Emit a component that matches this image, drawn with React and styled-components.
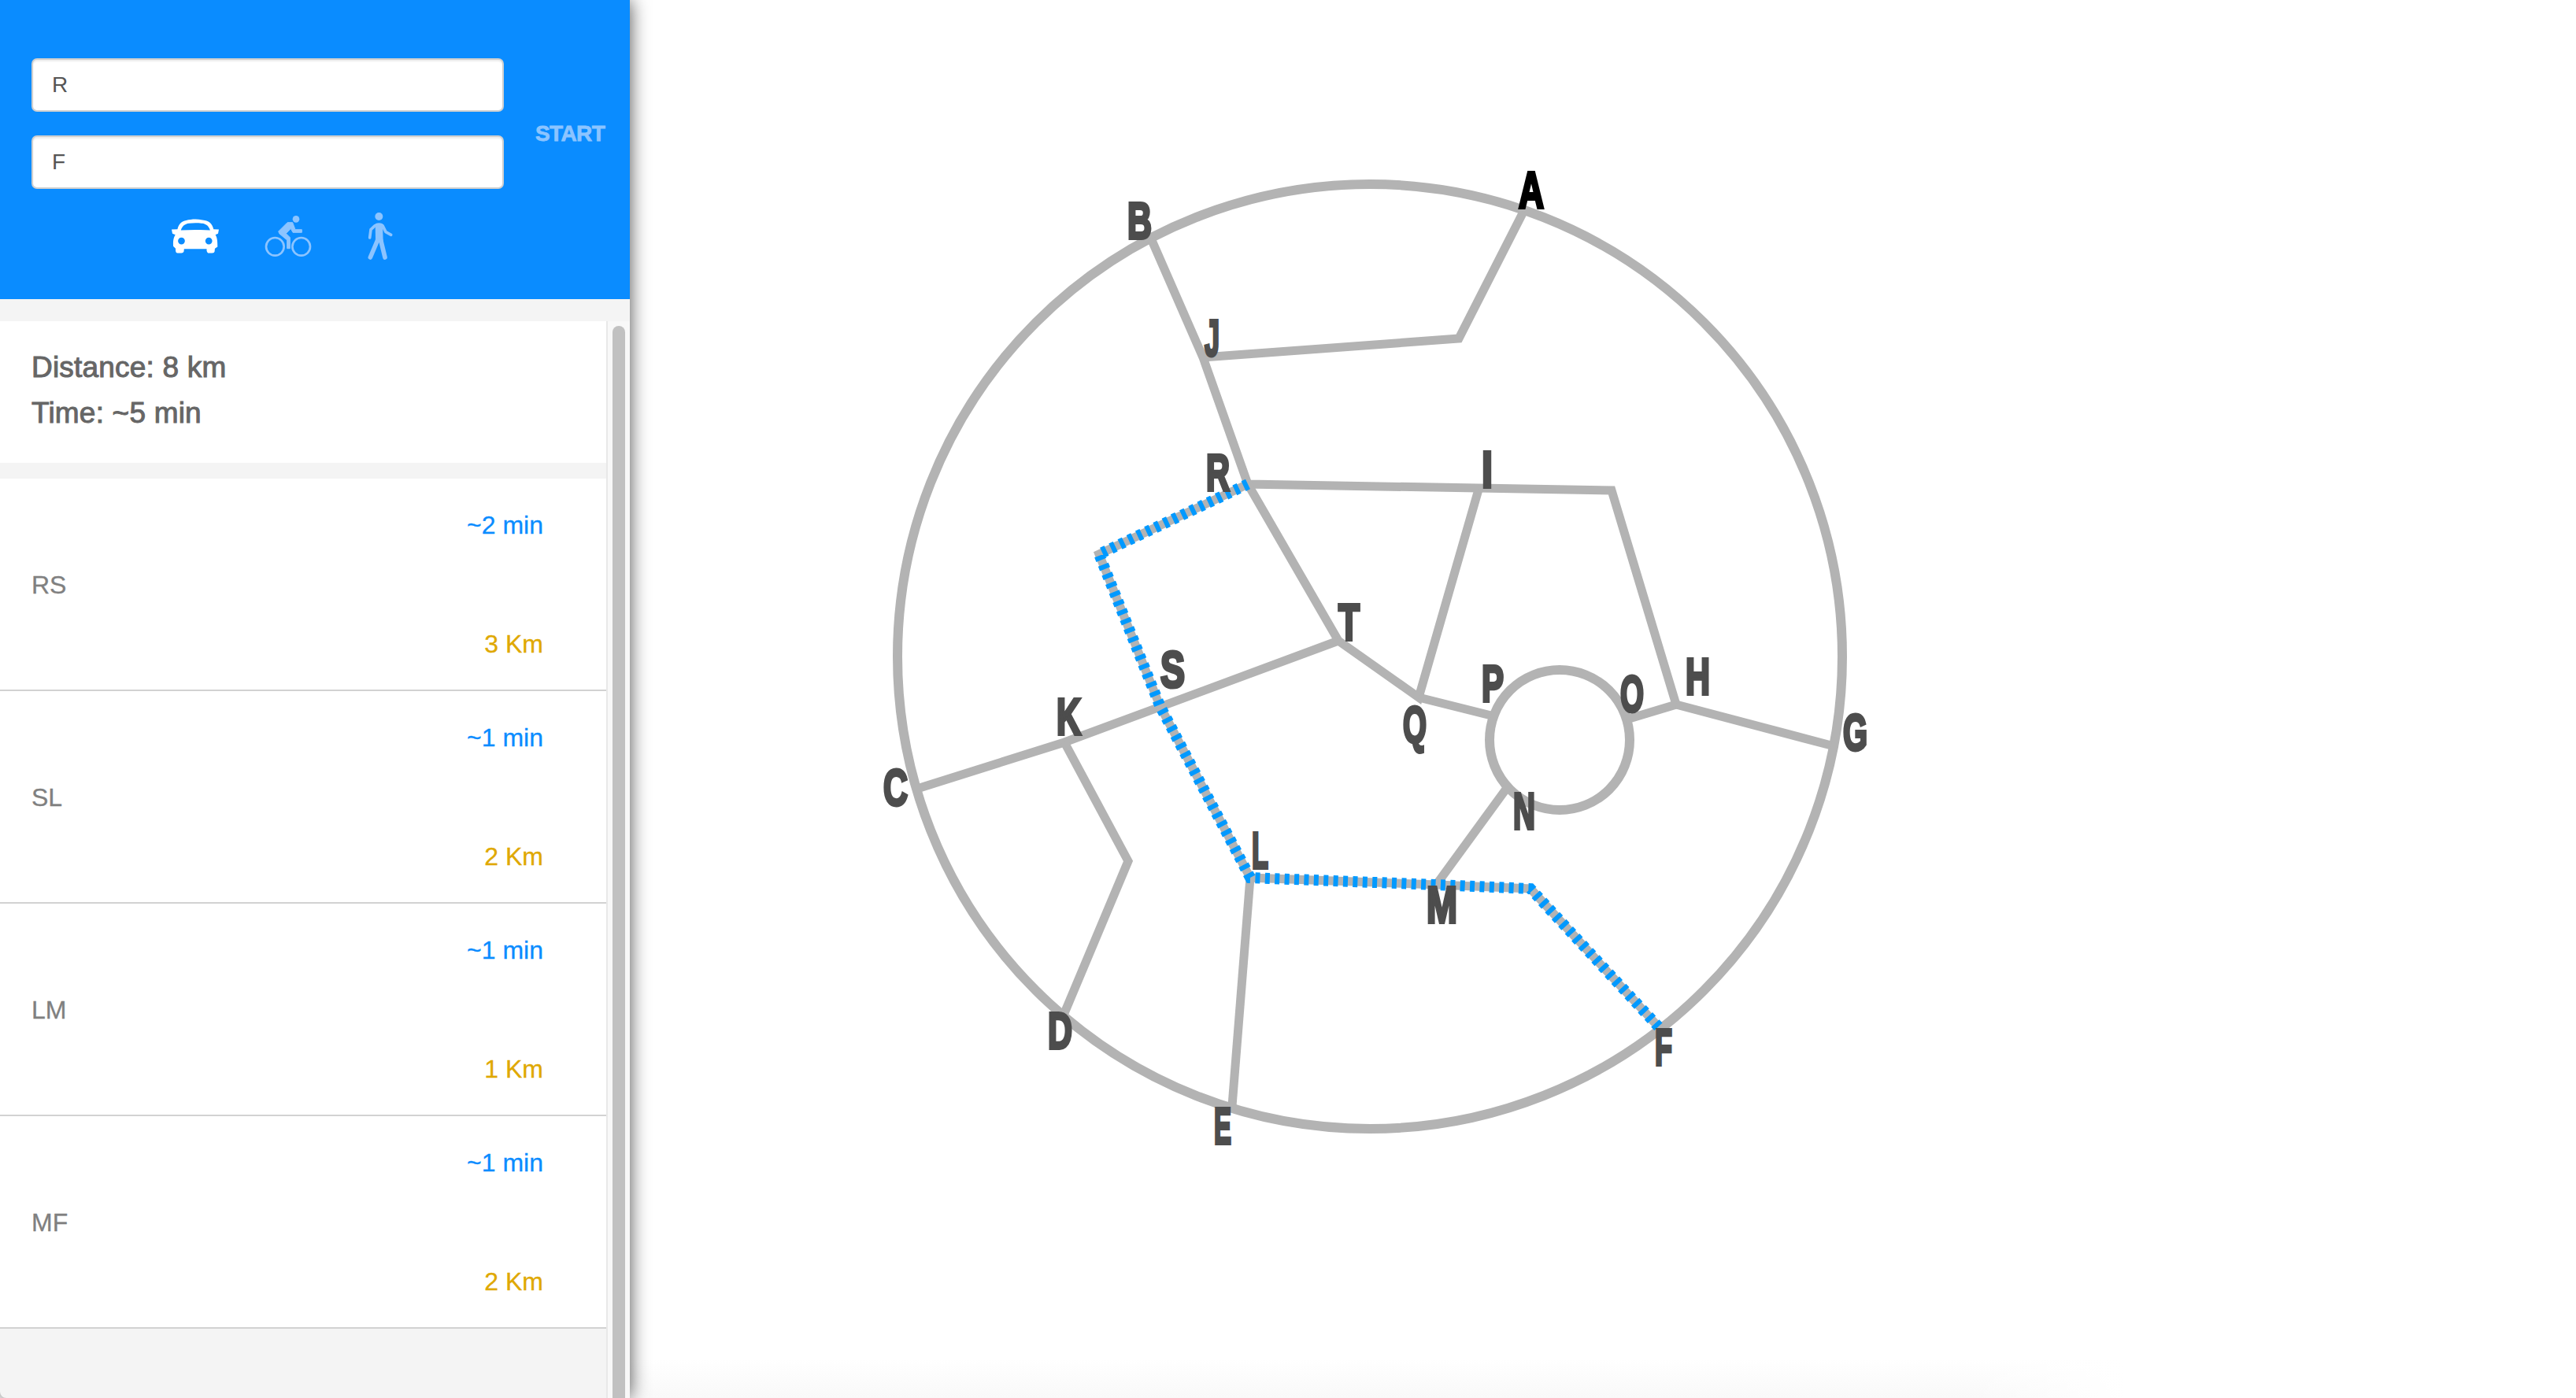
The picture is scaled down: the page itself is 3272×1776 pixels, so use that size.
import React from "react";
import styled, { createGlobalStyle } from "styled-components";

const GlobalStyle = createGlobalStyle`
  html, body {
    margin: 0;
    padding: 0;
    background: #fff;
    font-family: "Liberation Sans", Arial, sans-serif;
  }
`;

const steps = [
  { name: "RS", time: "~2 min", dist: "3 Km" },
  { name: "SL", time: "~1 min", dist: "2 Km" },
  { name: "LM", time: "~1 min", dist: "1 Km" },
  { name: "MF", time: "~1 min", dist: "2 Km" },
];

const roads = [
  "M1935 269 L1853 430 L1528 454",
  "M1462 303 L1528 454 L1585 615 L2047 623 L2129 895 L2066 914",
  "M1878 622 L1802 886 L1700 814 L1585 615",
  "M1802 886 L1894 909",
  "M2129 895 L2326 947",
  "M1700 814 L1352 943 L1168 1001",
  "M1352 943 L1433 1094 L1352 1287",
  "M1588 1115 L1565 1405",
  "M1914 1001 L1825 1123",
];

const route =
  "M1585 615 L1396 704 L1473 896 L1588 1115 L1825 1124 L1944 1129 L2108 1306";

const labels = [
  { t: "A", x: 1929, y: 264, w: 32, dark: true },
  { t: "B", x: 1432, y: 303, w: 31 },
  { t: "J", x: 1530, y: 452, w: 19 },
  { t: "R", x: 1532, y: 623, w: 30 },
  { t: "I", x: 1882, y: 619, w: 14 },
  { t: "T", x: 1700, y: 813, w: 27 },
  { t: "S", x: 1474, y: 873, w: 31 },
  { t: "P", x: 1882, y: 891, w: 28 },
  { t: "Q", x: 1782, y: 943, w: 30 },
  { t: "O", x: 2058, y: 904, w: 30 },
  { t: "H", x: 2141, y: 882, w: 31 },
  { t: "G", x: 2341, y: 953, w: 31 },
  { t: "N", x: 1922, y: 1053, w: 28 },
  { t: "M", x: 1812, y: 1172, w: 39 },
  { t: "F", x: 2102, y: 1353, w: 22 },
  { t: "K", x: 1342, y: 933, w: 31 },
  { t: "C", x: 1122, y: 1023, w: 31 },
  { t: "L", x: 1590, y: 1103, w: 21 },
  { t: "D", x: 1331, y: 1332, w: 31 },
  { t: "E", x: 1542, y: 1453, w: 22 },
];

function CarIcon() {
  return (
    <svg width="60" height="44" viewBox="85 85 178 130">
      <path
        fill="#fff"
        fillRule="evenodd"
        d="M85 125 L107 124 C112 105 122 94 140 91 C160 85 190 85 210 91 C228 94 238 105 243 124 L263 125 L260 140 L250 145 C256 155 258 165 258 190 L248 197 L247 208 Q246 214 238 214 L225 214 Q219 214 217 204 L217 198 L132 198 L131 208 Q129 214 122 214 L107 214 Q101 214 100 205 L100 197 L91 188 C90 165 93 155 99 145 L88 140 Z M120 128 C125 112 135 104 150 102 C165 100 185 100 200 102 C215 104 225 112 230 128 Q175 124 120 128 Z M109 168 A13 13 0 1 0 135 168 A13 13 0 1 0 109 168 Z M212 168 A13 13 0 1 0 238 168 A13 13 0 1 0 212 168 Z"
      />
    </svg>
  );
}

function BikeIcon() {
  return (
    <svg width="60" height="52" viewBox="438 72 180 156">
      <g fill="none" stroke="#8cc4ff" strokeWidth="8">
        <circle cx="478" cy="190" r="34" />
        <circle cx="578" cy="190" r="34" />
      </g>
      <circle cx="558" cy="85" r="13" fill="#8cc4ff" />
      <path
        fill="#8cc4ff"
        stroke="#8cc4ff"
        strokeWidth="3"
        strokeLinejoin="round"
        d="M525 98 L545 98 L555 125 L580 125 L580 136 L546 136 L538 121 L520 140 L535 155 L535 197 L524 197 L524 165 L495 141 L491 132 Z"
      />
    </svg>
  );
}

function WalkIcon() {
  return (
    <svg width="60" height="60" viewBox="789 60 180 180">
      <circle cx="871" cy="75" r="15" fill="#8cc4ff" />
      <path fill="#8cc4ff" d="M857 103 Q871 96 885 103 L887 170 L858 170 Z" />
      <g fill="none" stroke="#8cc4ff" strokeLinecap="round" strokeLinejoin="round">
        <path strokeWidth="17" d="M866 165 L838 231 M878 165 L894 231" />
        <path strokeWidth="11" d="M856 110 L840 125 L836 156 M885 110 L897 134 L917 145" />
      </g>
    </svg>
  );
}

export default function App() {
  return (
    <Page>
      <GlobalStyle />
      <Sidebar>
        <Header>
          <FormColumn>
            <PlaceInput value="R" readOnly />
            <PlaceInput value="F" readOnly />
            <ModeRow>
              <ModeButton>
                <CarIcon />
              </ModeButton>
              <ModeButton>
                <BikeIcon />
              </ModeButton>
              <ModeButton>
                <WalkIcon />
              </ModeButton>
            </ModeRow>
          </FormColumn>
          <StartButton>START</StartButton>
        </Header>
        <Body>
          <Results>
            <Summary>
              <SummaryLine>Distance: 8 km</SummaryLine>
              <SummaryLine>Time: ~5 min</SummaryLine>
            </Summary>
            <StepList>
              {steps.map((s, i) => (
                <Step key={i}>
                  <StepTime>{s.time}</StepTime>
                  <StepName>{s.name}</StepName>
                  <StepDist>{s.dist}</StepDist>
                </Step>
              ))}
            </StepList>
          </Results>
          <ScrollTrack>
            <ScrollThumb />
          </ScrollTrack>
        </Body>
      </Sidebar>
      <MapArea>
        <svg width="2472" height="1776" viewBox="800 0 2472 1776">
          <g fill="none" stroke="#b3b3b3" strokeWidth="11" strokeLinejoin="miter">
            <circle cx="1740" cy="834" r="600" strokeWidth="12" />
            <circle cx="1981" cy="940" r="89" strokeWidth="12" />
            {roads.map((d, i) => (
              <path key={i} d={d} />
            ))}
            <path d={route} />
          </g>
          <path
            d={route}
            fill="none"
            stroke="#0099ff"
            strokeWidth="14"
            strokeDasharray="6 6.4"
          />
          {labels.map((l) => (
            <MapLabel
              key={l.t}
              x={l.x}
              y={l.y}
              textLength={l.w}
              lengthAdjust="spacingAndGlyphs"
              $dark={l.dark}
            >
              {l.t}
            </MapLabel>
          ))}
        </svg>
      </MapArea>
    </Page>
  );
}

const Page = styled.div`
  display: flex;
  width: 3272px;
  height: 1776px;
  overflow: hidden;
  background: #fff;
`;

const Sidebar = styled.aside`
  position: relative;
  z-index: 1;
  display: flex;
  flex-direction: column;
  flex: 0 0 800px;
  height: 100%;
  background: #f4f4f4;
  border-bottom-left-radius: 8px;
  box-shadow: 0 0 24px rgba(0, 0, 0, 0.7);
`;

const Header = styled.header`
  display: flex;
  align-items: flex-start;
  flex: 0 0 380px;
  box-sizing: border-box;
  padding: 74px 0 0 40px;
  background: #0a8cff;
`;

const FormColumn = styled.div`
  display: flex;
  flex-direction: column;
  gap: 30px;
  width: 600px;
`;

const PlaceInput = styled.input`
  box-sizing: border-box;
  width: 100%;
  height: 68px;
  padding: 0 24px;
  border: 2px solid #cfcfcf;
  border-radius: 7px;
  background: #fff;
  box-shadow: inset 0 2px 2px rgba(0, 0, 0, 0.08);
  color: #555;
  font-family: "Liberation Sans", Arial, sans-serif;
  font-size: 28px;
  outline: none;
`;

const ModeRow = styled.div`
  display: flex;
  justify-content: center;
  align-items: center;
  gap: 58px;
  height: 60px;
  padding-left: 52px;
`;

const ModeButton = styled.div`
  display: flex;
  justify-content: center;
  align-items: center;
  width: 60px;
  height: 60px;
`;

const StartButton = styled.div`
  margin: 80px 0 0 40px;
  color: #8cc4ff;
  font-size: 28px;
  font-weight: bold;
  letter-spacing: -0.6px;
  -webkit-text-stroke: 0.8px #8cc4ff;
`;

const Body = styled.div`
  display: flex;
  flex: 1;
  min-height: 0;
`;

const Results = styled.div`
  flex: 0 0 770px;
  padding-top: 28px;
`;

const Summary = styled.section`
  box-sizing: border-box;
  height: 180px;
  padding: 30px 40px 0;
  background: #fff;
`;

const SummaryLine = styled.div`
  height: 58px;
  color: #666;
  font-size: 37px;
  line-height: 58px;
  -webkit-text-stroke: 1px #666;
  letter-spacing: 0.2px;
`;

const StepList = styled.ul`
  margin: 20px 0 0;
  padding: 0;
  list-style: none;
`;

const Step = styled.li`
  display: grid;
  grid-auto-rows: 37px;
  row-gap: 38.5px;
  box-sizing: border-box;
  height: 270px;
  padding: 41px 80px 0 40px;
  background: #fff;
  border-bottom: 2px solid #d2d2d2;
  font-size: 32px;
  line-height: 37px;
  -webkit-text-stroke: 0.3px;
`;

const StepTime = styled.div`
  color: #0a8cff;
  text-align: right;
`;

const StepName = styled.div`
  color: #808080;
`;

const StepDist = styled.div`
  color: #dfa800;
  text-align: right;
`;

const ScrollTrack = styled.div`
  flex: 1;
  box-sizing: border-box;
  margin-top: 28px;
  padding: 6px 6px 0;
  background: #f8f8f8;
  border-left: 2px solid #e8e8e8;
`;

const ScrollThumb = styled.div`
  height: 100%;
  border-radius: 8px 8px 0 0;
  background: #c1c1c1;
`;

const MapArea = styled.main`
  flex: 1;
  height: 100%;
  background:
    linear-gradient(to left, #fff, rgba(255, 255, 255, 0)) no-repeat 1700px bottom / 200px 50px,
    linear-gradient(to bottom, #fff, #f9f9f9) no-repeat left bottom / 1900px 50px,
    #fff;
`;

const MapLabel = styled.text`
  fill: ${(p) => (p.$dark ? "#000" : "#4d4d4d")};
  stroke: ${(p) => (p.$dark ? "#000" : "#4d4d4d")};
  stroke-width: 4px;
  font-family: "Liberation Sans", Arial, sans-serif;
  font-size: 64px;
  font-weight: bold;
`;
